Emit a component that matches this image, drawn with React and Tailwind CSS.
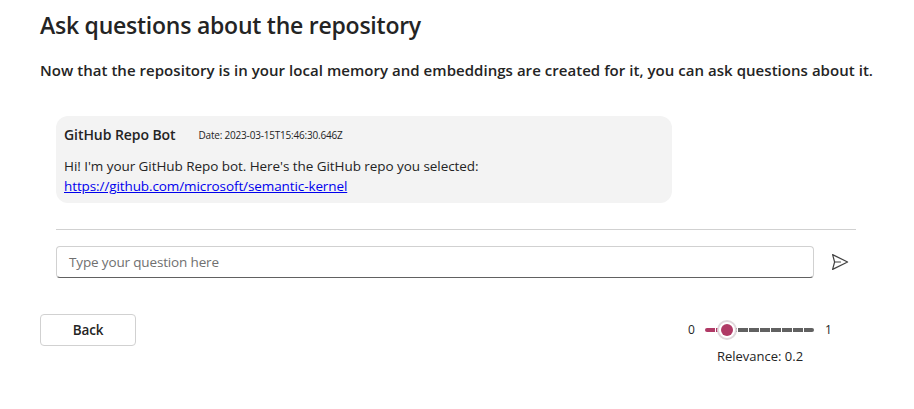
import React from 'react';

const SendIcon = () => (
  <svg className="w-[20px] h-[20px] text-[#424242]" viewBox="0 0 20 20" fill="none" stroke="currentColor" strokeWidth="1.2" strokeLinejoin="round" strokeLinecap="round">
    <path d="M2.6 2.6 17.6 10 2.6 17.4 4.6 10 2.6 2.6Z" />
    <path d="M4.6 10H10.5" />
  </svg>
);

const App = () => {
  const ticks = [0, 1, 2, 3, 4, 5, 6, 7, 8, 9];

  return (
    <div className="w-[914px] h-[409px] bg-white overflow-hidden pl-[40px] font-['Open_Sans','Noto_Sans',sans-serif] text-[#242424]">
      <h1 className="text-[23px] leading-[32px] font-semibold mt-[9px] tracking-[-0.24px]">Ask questions about the repository</h1>
      <p className="text-[15px] leading-[22px] font-semibold mt-[18px] whitespace-nowrap tracking-[0.04px]">
        Now that the repository is in your local memory and embeddings are created for it, you can ask questions about it.
      </p>

      <div className="ml-[16px] mt-[35px] w-[616px] h-[87px] bg-[#f3f3f3] rounded-[12px] px-[8px] pt-[9px]">
        <div className="flex items-center h-[20px]">
          <span className="text-[14px] font-semibold leading-[20px] tracking-[-0.07px] whitespace-nowrap">GitHub Repo Bot</span>
          <span className="text-[10px] leading-[14px] ml-[23px] tracking-[-0.2px] whitespace-nowrap">Date: 2023-03-15T15:46:30.646Z</span>
        </div>
        <div className="text-[13.5px] leading-[20px] mt-[11px] tracking-[-0.06px]">
          <p>Hi! I'm your GitHub Repo bot. Here's the GitHub repo you selected:</p>
          <a href="#" className="text-[#0000ee] underline tracking-[-0.1px]">https://github.com/microsoft/semantic-kernel</a>
        </div>
      </div>

      <div className="ml-[16px] mt-[26px] w-[800px] h-px bg-[#d1d1d1]" />

      <div className="ml-[16px] mt-[16px] flex items-center">
        <div className="w-[758px] h-[32px] border border-[#d1d1d1] border-b-[#616161] rounded-[4px] flex items-center px-[12px] text-[13.5px] text-[#707070] tracking-[-0.15px]">
          Type your question here
        </div>
        <div className="ml-[16px]"><SendIcon /></div>
      </div>

      <div className="flex mt-[36px] items-start">
        <button className="w-[96px] h-[32px] border border-[#d1d1d1] rounded-[4px] text-[13.5px] font-semibold tracking-[-0.15px] bg-white">Back</button>

        <div className="ml-[552px] flex flex-col items-center w-[144px]">
          <div className="flex items-center h-[32px] w-full">
            <span className="w-[8px] text-[12px] text-[#242424]">0</span>
            <div className="ml-[9px] w-[109px] h-[20px] flex items-center relative">
              <div className="flex items-center gap-[1px] w-full h-[4px]">
                {ticks.map((t) => (
                  <div key={t} className={`flex-1 h-[4px] ${t < 2 ? 'bg-[#b03a66]' : 'bg-[#616161]'} first:rounded-l-full last:rounded-r-full`} />
                ))}
              </div>
              <div className="absolute left-[12px] top-[0px] w-[20px] h-[20px] rounded-full bg-white border-2 border-[#e0d8dc] flex items-center justify-center">
                <div className="w-[12px] h-[12px] rounded-full bg-[#b03a66]" />
              </div>
            </div>
            <span className="ml-[11px] text-[12px]">1</span>
          </div>
          <span className="text-[13px] leading-[20px] tracking-[0px] whitespace-nowrap">Relevance: 0.2</span>
        </div>
      </div>
    </div>
  );
};

export default App;
